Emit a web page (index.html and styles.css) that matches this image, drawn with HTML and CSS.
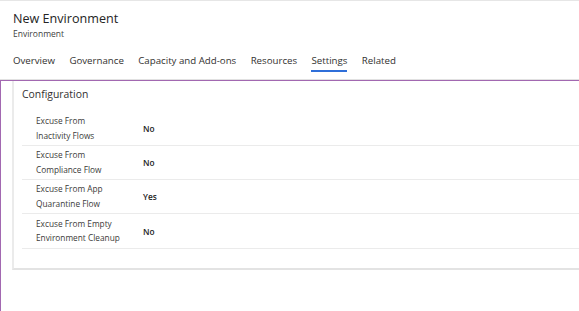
FILE: index.html
```html
<!DOCTYPE html>
<html>
<head>
<meta charset="utf-8">
<link rel="stylesheet" href="styles.css">
</head>
<body>
<header class="header">
  <div class="title">New Environment</div>
  <div class="subtitle">Environment</div>
  <nav class="tabs">
    <span class="tab">Overview</span>
    <span class="tab">Governance</span>
    <span class="tab">Capacity and Add-ons</span>
    <span class="tab">Resources</span>
    <span class="tab active">Settings</span>
    <span class="tab">Related</span>
  </nav>
</header>
<main class="frame">
  <section class="card">
    <h2 class="card-title">Configuration</h2>
    <div class="rows">
      <div class="row"><div class="label">Excuse From<br>Inactivity Flows</div><div class="value">No</div></div>
      <div class="row"><div class="label">Excuse From<br>Compliance Flow</div><div class="value">No</div></div>
      <div class="row"><div class="label">Excuse From App<br>Quarantine Flow</div><div class="value">Yes</div></div>
      <div class="row"><div class="label">Excuse From Empty<br>Environment Cleanup</div><div class="value">No</div></div>
    </div>
  </section>
</main>
</body>
</html>
```
FILE: styles.css
```css
html, body {
  margin: 0;
  padding: 0;
  background: #ffffff;
  overflow: hidden;
}
body {
  font-family: "Open Sans", "Noto Sans", sans-serif;
  color: #323130;
  width: 579px;
  height: 311px;
}
.header {
  border-top: 1px solid #e6e6e6;
  border-bottom: 1px solid #e1e1e1;
  padding: 0 13px;
  box-sizing: border-box;
  height: 80px;
  display: flex;
  flex-direction: column;
}
.title {
  font-size: 12.6px;
  line-height: 18px;
  margin-top: 9px;
  color: #242424;
}
.subtitle {
  font-size: 8.5px;
  line-height: 11px;
  color: #424242;
}
.tabs {
  display: flex;
  gap: 14.4px;
  margin-top: 14px;
}
.tab {
  font-size: 9.7px;
  line-height: 16px;
  padding-bottom: 1px;
  border-bottom: 2px solid transparent;
  color: #323130;
}
.tab.active {
  border-bottom-color: #2f6fd9;
}
.frame {
  border-top: 1px solid #a268b1;
  border-left: 1px solid #a268b1;
  height: 230px;
  padding-left: 11px;
}
.card {
  border-left: 2px solid #ebebeb;
  border-bottom: 2px solid #e3e3e3;
  padding: 3px 0 19px 8px;
}
.card-title {
  margin: 0 0 8px 0;
  font-weight: 400;
  font-size: 10.4px;
  line-height: 20px;
  color: #323130;
}
.row {
  display: grid;
  grid-template-columns: 107px 1fr;
  align-items: center;
  height: 33px;
  border-bottom: 1px solid #ebebeb;
  padding-left: 14px;
}
.label {
  font-size: 8.3px;
  line-height: 14.5px;
  color: #3b3a39;
}
.value {
  font-size: 8.3px;
  font-weight: 600;
  color: #242424;
}
.row:last-child {
  height: 34px;
}
```
